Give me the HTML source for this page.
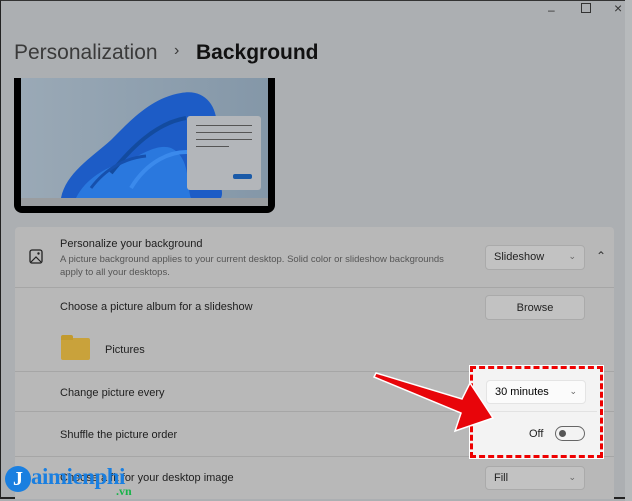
<!DOCTYPE html>
<html><head><style>
body{margin:0;width:632px;height:501px;overflow:hidden;background:#acafb2;font-family:"Liberation Sans",sans-serif;position:relative}
.abs{position:absolute}
.win{left:0;top:0;width:630px;height:499px;border-left:1px solid #222;border-top:1px solid #333;border-bottom:2px solid #222;box-sizing:border-box;position:absolute}
.t{font-size:11px;color:#1e1e1e}
.card{background:#b8b8b8}
.btn{background:#c2c2c2;border:1px solid #aaa;border-radius:4px;font-size:11px;color:#222;box-sizing:border-box}
.sep{height:1px;background:#a6a6a6}
</style></head><body>
<div class="win"></div>
<div class="abs" style="left:625px;top:0;width:7px;height:501px;background:#b7babc"></div>
<div class="abs" style="left:548px;top:3px;font-size:12px;color:#333">&#8211;</div>
<div class="abs" style="left:581px;top:3px;width:8px;height:8px;border:1px solid #333"></div>
<div class="abs" style="left:614px;top:0px;font-size:14px;color:#333">×</div>
<div class="abs" style="left:14px;top:41px;font-size:21px;color:#3a3a3a">Personalization</div>
<div class="abs" style="left:174px;top:42px;font-size:16px;color:#3a3a3a">›</div>
<div class="abs" style="left:196px;top:41px;font-size:21px;color:#111;font-weight:bold">Background</div>
<!-- monitor -->
<div class="abs" style="left:14px;top:78px;width:261px;height:135px;background:#000;border-radius:0 0 8px 8px"></div>
<div class="abs" style="left:21px;top:78px;width:247px;height:128px;background:linear-gradient(90deg,#9aa9b6,#8497a8)"></div>
<svg class="abs" style="left:21px;top:78px" width="247" height="128">
<path d="M40 120 C45 95 70 80 90 62 C110 42 130 20 160 15 C185 10 200 30 195 60 C190 90 205 110 200 120 Z" fill="#1d5cc6"/>
<path d="M55 120 C65 100 85 90 100 85 C120 78 135 65 150 70 C170 80 165 105 170 120 Z" fill="#2a78de"/>
<path d="M90 95 C110 70 135 45 165 40" stroke="#134b9f" stroke-width="4" fill="none"/>
<path d="M110 110 C125 85 150 70 175 75" stroke="#3b8aec" stroke-width="4" fill="none"/>
<path d="M70 110 C85 90 105 80 125 78" stroke="#1650ad" stroke-width="3" fill="none"/>
<rect x="0" y="120" width="247" height="8" fill="#9a9da0"/>
</svg>
<div class="abs" style="left:187px;top:116px;width:74px;height:74px;background:#b3b6ba;border-radius:3px"></div>
<div class="abs" style="left:196px;top:125px;width:56px;height:1px;background:#555"></div>
<div class="abs" style="left:196px;top:132px;width:56px;height:1px;background:#555"></div>
<div class="abs" style="left:196px;top:139px;width:56px;height:1px;background:#555"></div>
<div class="abs" style="left:196px;top:146px;width:33px;height:1px;background:#555"></div>
<div class="abs" style="left:233px;top:174px;width:19px;height:5px;background:#1a5aa8;border-radius:2px"></div>
<!-- card -->
<div class="abs card" style="left:15px;top:227px;width:599px;height:272px;border-radius:4px 4px 0 0"></div>
<svg class="abs" style="left:29px;top:249px" width="14" height="15"><rect x="1" y="1" width="12" height="13" rx="2" fill="none" stroke="#222" stroke-width="1.3"/><path d="M2 13 L7 8 L12 13" fill="none" stroke="#222" stroke-width="1.2"/><circle cx="9.5" cy="4.5" r="1.2" fill="#222"/></svg>
<div class="abs t" style="left:60px;top:238px">Personalize your background</div>
<div class="abs" style="left:60px;top:253px;font-size:9.5px;color:#555;line-height:13px;width:400px">A picture background applies to your current desktop. Solid color or slideshow backgrounds apply to all your desktops.</div>
<div class="abs btn" style="left:485px;top:245px;width:100px;height:25px;padding:5px 8px">Slideshow<span style="float:right;color:#666;font-size:9px">&#8964;</span></div>
<div class="abs" style="left:596px;top:249px;font-size:12px;color:#333">&#8963;</div>
<div class="abs sep" style="left:15px;top:287px;width:599px"></div>
<div class="abs t" style="left:60px;top:301px">Choose a picture album for a slideshow</div>
<div class="abs btn" style="left:485px;top:295px;width:100px;height:25px;text-align:center;padding-top:6px">Browse</div>
<div class="abs" style="left:61px;top:338px;width:29px;height:22px;background:#c9a23b;border-radius:2px"></div>
<div class="abs" style="left:61px;top:335px;width:12px;height:5px;background:#c29a2e;border-radius:2px 2px 0 0"></div>
<div class="abs t" style="left:105px;top:344px">Pictures</div>
<div class="abs sep" style="left:15px;top:371px;width:599px"></div>
<div class="abs sep" style="left:15px;top:411px;width:599px"></div>
<div class="abs t" style="left:60px;top:387px">Change picture every</div>
<div class="abs sep" style="left:15px;top:456px;width:599px"></div>
<div class="abs t" style="left:60px;top:429px">Shuffle the picture order</div>
<div class="abs t" style="left:60px;top:472px">Choose a fit for your desktop image</div>
<div class="abs btn" style="left:485px;top:466px;width:100px;height:24px;padding:5px 8px">Fill<span style="float:right;color:#666;font-size:9px">&#8964;</span></div>
<!-- highlight -->
<div class="abs" style="left:470px;top:366px;width:133px;height:92px;background:#f3f3f3;border:3px dashed #e00;box-sizing:border-box;box-shadow:0 0 0 1px #fff"></div>
<div class="abs" style="left:486px;top:380px;width:100px;height:24px;background:#fbfbfb;border:1px solid #e4e4e4;border-radius:4px;box-sizing:border-box;font-size:11px;padding:5px 8px">30 minutes<span style="float:right;color:#666;font-size:9px">&#8964;</span></div>
<div class="abs" style="left:476px;top:411px;width:121px;height:1px;background:#e2e2e2"></div>
<div class="abs" style="left:529px;top:428px;font-size:11px;color:#222">Off</div>
<div class="abs" style="left:555px;top:426px;width:30px;height:15px;border:1px solid #666;border-radius:8px;box-sizing:border-box"></div>
<div class="abs" style="left:559px;top:430px;width:7px;height:7px;border-radius:50%;background:#555"></div>
<!-- arrow -->
<svg class="abs" style="left:370px;top:365px" width="130" height="70"><path d="M6 8 L92 34 L100 18 L123 53 L85 66 L91 48 L4 12 Z" fill="#e8050a" stroke="#fff" stroke-width="1.5"/></svg>
<!-- logo -->
<div class="abs" style="left:5px;top:466px;width:26px;height:26px;border-radius:50%;background:#1a7fe0;color:#fff;font:bold 20px 'Liberation Serif',serif;text-align:center;line-height:26px">J</div>
<div class="abs" style="left:31px;top:464px;font:bold 23px 'Liberation Serif',serif;color:#1a7fe0;letter-spacing:-0.5px">aimienphi</div>
<div class="abs" style="left:116px;top:484px;font:bold 12px 'Liberation Serif',serif;color:#19b34a">.vn</div>
</body></html>
